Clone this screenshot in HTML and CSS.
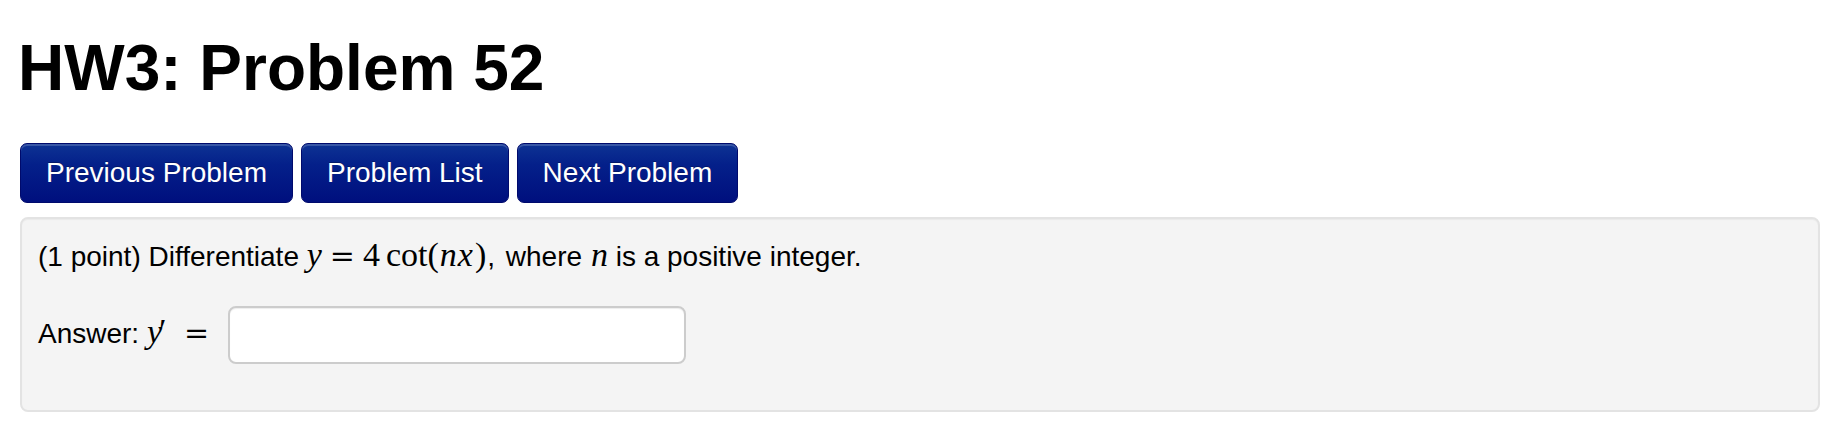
FILE: index.html
```html
<!DOCTYPE html>
<html>
<head>
<meta charset="utf-8">
<title>HW3: Problem 52</title>
<link rel="stylesheet" href="styles.css">
</head>
<body>
<div class="page">
  <h1 class="title">HW3: Problem 52</h1>
  <nav class="nav-buttons">
    <a class="btn" href="#">Previous Problem</a>
    <a class="btn" href="#">Problem List</a>
    <a class="btn" href="#">Next Problem</a>
  </nav>
  <div class="well">
    <p class="statement">(1 point) Differentiate <span class="math"><i class="mv mv-y">y</i><span class="mo">=</span><span class="mn">4</span><span class="mop">cot</span><span class="mp mp-open">(</span><i class="mv mv-n">n</i><i class="mv mv-x">x</i><span class="mp mp-close">)</span></span><span class="comma">,</span> where <span class="math"><i class="mv mv-n2">n</i></span> is a positive integer.</p>
    <div class="answer-row">
      <span class="answer-label">Answer: <span class="math"><span class="yprime"><i class="mv">y</i><span class="prime">′</span></span><span class="mo mo-eq">=</span></span></span>
      <input class="answer-input" type="text" aria-label="answer">
    </div>
  </div>
</div>
</body>
</html>
```

FILE: styles.css
```css
html, body {
  margin: 0;
  padding: 0;
  background: #ffffff;
}

body {
  font-family: "Liberation Sans", Arial, Helvetica, sans-serif;
  color: #000000;
}

.page {
  padding: 0 24px 0 20px;
}

.title {
  margin: 32px 0 39px -2px;
  font-size: 64px;
  line-height: 72px;
  font-weight: bold;
  color: #000000;
}

.nav-buttons {
  display: flex;
  gap: 8px;
}

.btn {
  display: flex;
  align-items: center;
  height: 60px;
  box-sizing: border-box;
  padding: 0 25px 1px 25px;
  font-size: 28px;
  color: #ffffff;
  text-decoration: none;
  text-shadow: 0 -1px 0 rgba(0, 0, 0, 0.25);
  background: linear-gradient(to bottom, #0e3394 0%, #04208a 35%, #000f7e 100%);
  border: 1px solid #000a6c;
  border-radius: 7px;
  box-shadow: inset 0 2px 0 rgba(255, 255, 255, 0.18);
}

.well {
  margin-top: 14px;
  width: 1800px;
  box-sizing: border-box;
  padding: 18px 16px 46px 16px;
  background: #f4f4f4;
  border: 2px solid #e3e3e3;
  border-radius: 8px;
  box-shadow: inset 0 1px 1px rgba(0, 0, 0, 0.04);
}

.statement {
  margin: 0 0 29px 0;
  font-size: 28px;
  line-height: 40px;
}

.math {
  font-family: "Liberation Serif", "Times New Roman", serif;
  font-size: 34px;
  line-height: 1;
  white-space: nowrap;
}

.mv {
  font-style: italic;
}

.mv-y {
  margin-right: 8px;
}

.mo {
  font-family: "DejaVu Serif", "Liberation Serif", serif;
  font-style: normal;
  font-size: 30px;
}

.mn {
  margin-left: 8px;
}

.mop {
  margin-left: 6px;
}

.mv-n {
  margin-left: 1px;
}

.mv-x {
  margin-left: 1px;
}

.mp-close {
  margin-left: 2px;
  margin-right: 1px;
}

.comma {
  margin-right: 3px;
}

.mv-n2 {
  margin-left: 1px;
}

.answer-row {
  display: flex;
  align-items: center;
}

.answer-label {
  font-size: 28px;
  line-height: 40px;
  margin-bottom: 3px;
  white-space: nowrap;
}

.yprime {
  display: inline-block;
  width: 23px;
}

.prime {
  font-family: "Liberation Serif", "DejaVu Serif", serif;
  font-size: 34px;
  vertical-align: 1px;
  margin-left: -3px;
}

.mo-eq {
  margin-left: 14px;
}

.answer-input {
  margin-left: 19px;
  width: 458px;
  height: 58px;
  box-sizing: border-box;
  padding: 0 12px;
  font-family: "Liberation Sans", Arial, sans-serif;
  font-size: 28px;
  background: #ffffff;
  border: 2px solid #cccccc;
  border-radius: 8px;
  box-shadow: inset 0 1px 1px rgba(0, 0, 0, 0.075);
  outline: none;
}
```
